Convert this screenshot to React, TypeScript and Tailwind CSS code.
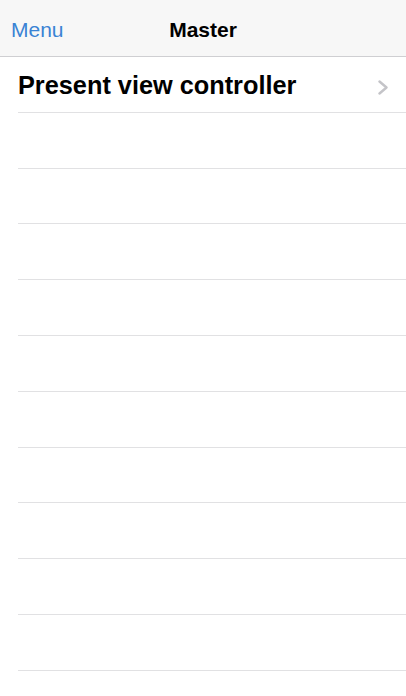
const rows = Array.from({ length: 11 }, (_, i) => i);

export default function App() {
  return (
    <div className="w-[406px] h-[696px] bg-white overflow-hidden" style={{ fontFamily: '"Liberation Sans", Arial, sans-serif' }}>
      {/* Navigation bar */}
      <header className="relative h-[57px] pt-[3px] bg-[#f7f7f7] border-b border-[#cfcfd2] flex items-center justify-center">
        <span className="absolute left-[11px] text-[21px] text-[#3a83d4]">Menu</span>
        <span className="text-[21px] font-bold text-black">Master</span>
      </header>

      {/* Table rows */}
      <div className="flex flex-col">
        {rows.map((i) => (
          <div key={i} className="pl-[18px]">
            <div className="h-[55.8px] border-b border-[#e1e1e3] flex items-center justify-between pr-[17px]">
              {i === 0 && (
                <>
                  <span className="pt-[3px] text-[25.3px] font-bold text-black">Present view controller</span>
                  <svg width="11" height="15" viewBox="0 0 11 15" className="mt-[6px]" fill="none">
                    <path d="M1.5 1.5 L8.5 7.5 L1.5 13.5" stroke="#c4c4c8" strokeWidth="2.4" strokeLinecap="round" strokeLinejoin="round" />
                  </svg>
                </>
              )}
            </div>
          </div>
        ))}
      </div>
    </div>
  );
}
